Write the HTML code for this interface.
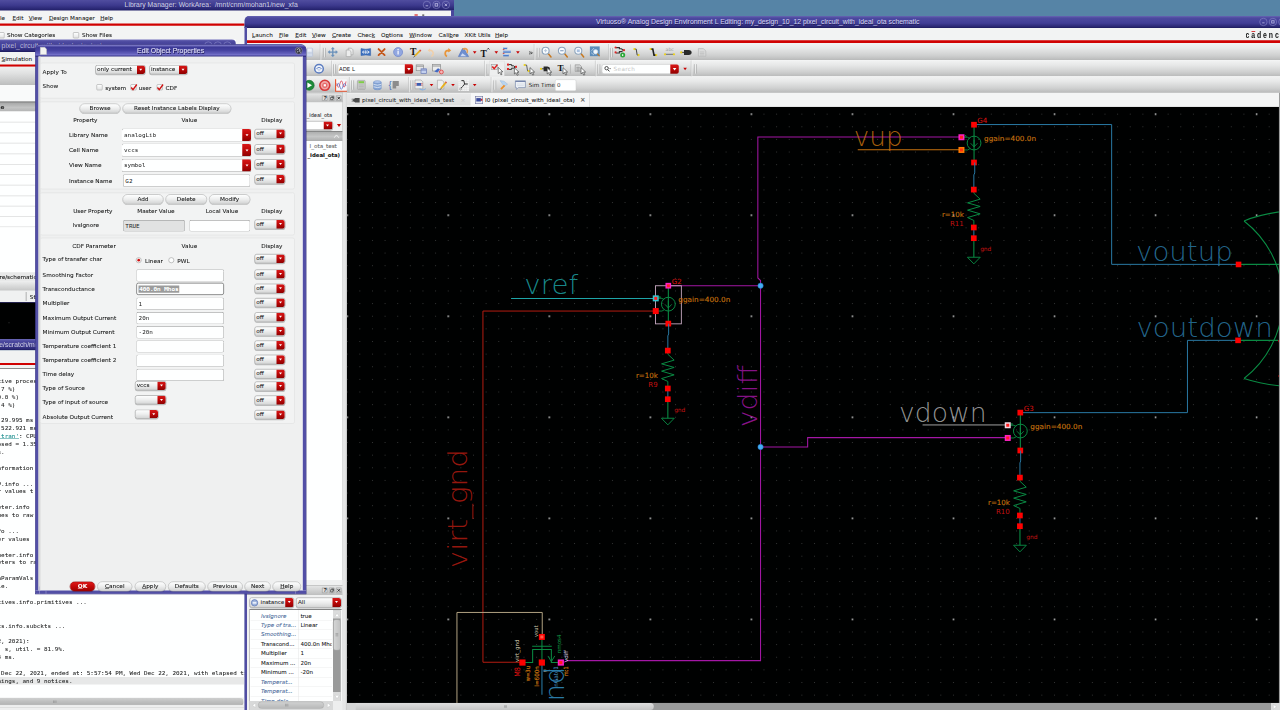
<!DOCTYPE html>
<html lang="en"><head><meta charset="utf-8"><title>Virtuoso Analog Design Environment L Editing</title>
<style>
html,body{margin:0;padding:0}
body{width:1280px;height:710px;overflow:hidden;position:relative;background:#5684a6}
#root{opacity:0.999;position:absolute;left:0;top:0;width:5120px;height:2840px;transform:scale(0.25);transform-origin:0 0;font-family:"DejaVu Sans","Liberation Sans",sans-serif;font-size:23px;color:#1a1a1a;line-height:1;-webkit-text-stroke:0.32px currentColor}
.a{position:absolute;white-space:nowrap}
.t{position:absolute;white-space:nowrap;line-height:32px;height:32px;margin-top:-16px}
.tc{position:absolute;white-space:nowrap;line-height:32px;height:32px;margin-top:-16px;transform:translateX(-50%)}
u{text-decoration-thickness:2.2px;text-underline-offset:1.4px}
.tb{background:linear-gradient(#6c68b6 0%,#4d499f 18%,#423e96 60%,#2c2874 88%,#1e1b5c 100%)}
.ttl{color:#cfcdee;font-family:"Liberation Sans",sans-serif;font-size:27.6px;text-shadow:1.6px 1.6px 0 #1b1850}
.mono{-webkit-text-stroke:0.2px currentColor;font-family:"DejaVu Sans Mono","Liberation Mono",monospace}
.red{background:#d10000}
.tool{background:linear-gradient(#f3f3f3 0%,#e8e8e8 30%,#d0d0d0 72%,#bebebe 94%,#b6b6b6 100%)}
.btn{position:absolute;box-sizing:border-box;border:2.4px solid #a9a9a9;border-radius:20px;background:linear-gradient(#ffffff 0%,#f0f0f0 45%,#d2d2d2 100%);text-align:center;line-height:34.4px;box-shadow:0 2.4px 2.4px rgba(0,0,0,.18)}
.cmb{position:absolute;box-sizing:border-box;border:2.6px solid #8a8a8a;border-radius:8.8px;box-shadow:0 2.8px 2px rgba(0,0,0,.22);background:linear-gradient(#ffffff 0%,#eeeeee 50%,#d4d4d4 100%);overflow:hidden}
.cmb i{position:absolute;right:0;top:0;bottom:0;width:32.8px;background:linear-gradient(#d81818 0%,#c00808 45%,#8e0000 100%);border-radius:0 8px 8px 0}
.cmb i:after{content:"";position:absolute;left:9.6px;top:12.4px;border-left:6.8px solid transparent;border-right:6.8px solid transparent;border-top:8.8px solid #fff}
.cmb span{position:absolute;left:5.2px;top:50%;margin-top:-18px;line-height:32px}
.fld{position:absolute;box-sizing:border-box;border:2.6px solid #a0a0a0;border-top-color:#888;border-radius:8px;background:#fff}
.fld span{position:absolute;left:7.6px;top:50%;margin-top:-16.4px;-webkit-text-stroke:0;line-height:32px;font-family:"DejaVu Sans Mono","Liberation Mono",monospace;font-size:23.8px;color:#222}
.grp{position:absolute;box-sizing:border-box;border:2.4px solid #dcdcdc;border-radius:8px;background:#f3f3f3}
.cb{position:absolute;box-sizing:border-box;width:24px;height:24px;border:2.4px solid #9a9a9a;border-radius:4px;background:linear-gradient(#fff,#e4e4e4)}
</style></head><body><div id="root">
<!-- Library Manager window -->
<div class="a" style="left:0;top:0;width:1815.6px;height:240px;background:#f4f4f4"></div>
<div class="a" style="left:0;top:0;width:1815.6px;height:42.4px;background:linear-gradient(#514d9f 0%,#3e3a8e 50%,#221f68 100%)"></div>
<div class="a" style="left:1804px;top:40px;width:11.6px;height:32px;background:#4a469c"></div>
<div class="t ttl" style="left:498.4px;top:18.8px">Library Manager: WorkArea:&nbsp; /mnt/cnm/mohan1/new_xfa</div>
<svg class="a" style="left:1680px;top:0" width="136" height="44" viewBox="420 0 34 11"><g fill="none" stroke="#8c89c9" stroke-width="0.6"><circle cx="426.9" cy="4.9" r="3.7"/><circle cx="436.4" cy="4.9" r="3.7"/><circle cx="445.9" cy="4.9" r="3.7"/></g><g stroke="#b9b7e2" stroke-width="0.9" fill="none"><path d="M425.6 5.8h2.6"/><rect x="435.1" y="3.7" width="2.6" height="2.4"/><path d="M444.7 3.7l2.4 2.4M447.1 3.7l-2.4 2.4"/></g></svg>
<div class="t" style="left:0;top:72.4px;font-size:22.48px">le</div>
<div class="t" style="left:50px;top:72.4px;font-size:22.48px"><u>E</u>dit</div>
<div class="t" style="left:115.2px;top:72.4px;font-size:22.48px"><u>V</u>iew</div>
<div class="t" style="left:195.6px;top:72.4px;font-size:22.48px"><u>D</u>esign Manager</div>
<div class="t" style="left:400.8px;top:72.4px;font-size:22.48px"><u>H</u>elp</div>
<div class="a red" style="left:0;top:93.6px;width:1804px;height:9.6px"></div>
<div class="cb" style="left:-6px;top:128.8px"></div>
<div class="t" style="left:28px;top:141.2px">Show Categories</div>
<div class="cb" style="left:292px;top:128.8px"></div>
<div class="t" style="left:328px;top:141.2px">Show Files</div>

<!-- ADE window (pixel_circuit...) -->
<div class="a" style="left:0;top:158.4px;width:943.2px;height:1080px;background:#fff"></div>
<div class="a tb" style="left:0;top:158.4px;width:943.2px;height:49.2px;border-radius:0 16px 0 0"></div>
<div class="t ttl" style="left:6.4px;top:182.8px;font-size:28px;color:#b9b6e2">pixel_circuit_with_ideal_ota_test</div>
<svg class="a" style="left:800px;top:158.4px" width="144" height="48" viewBox="200 39.6 36 12"><g fill="none" stroke="#8c89c9" stroke-width="0.6"><circle cx="208.3" cy="45.6" r="3.7"/><circle cx="217.8" cy="45.6" r="3.7"/><circle cx="227.3" cy="45.6" r="3.7"/></g></svg>
<div class="a" style="left:0;top:207.6px;width:943.2px;height:52px;background:#f3f3f3"></div>
<div class="t" style="left:6.4px;top:236.8px"><u>S</u>imulation</div>
<div class="a red" style="left:0;top:258px;width:943.2px;height:8.8px"></div>
<div class="a" style="left:0;top:266px;width:943.2px;height:74.4px;background:linear-gradient(#f0f0f0 0%,#e2e2e2 35%,#c9c9c9 80%,#bdbdbd 100%)"></div>
<div class="a" style="left:0;top:340.4px;width:943.2px;height:66.4px;background:#fafafa"></div>
<div class="a" style="left:0;top:406px;width:943.2px;height:40px;background:linear-gradient(#5c5c5c 0%,#a9a9a9 14%,#c4c4c4 60%,#b3b3b3 100%)"></div>
<div class="t" style="left:2px;top:428px;font-weight:bold;color:#222">e</div>
<div class="a" style="left:0;top:446px;width:943.2px;height:644px;background:#fff"></div>
<div class="a" style="left:0;top:487.2px;width:943.2px;height:3.2px;background:#dcdcdc"></div>
<div class="a" style="left:0;top:529.6px;width:943.2px;height:3.2px;background:#dcdcdc"></div>
<div class="a" style="left:0;top:571.2px;width:943.2px;height:3.2px;background:#dcdcdc"></div>
<div class="a" style="left:0;top:613.6px;width:943.2px;height:3.2px;background:#dcdcdc"></div>
<div class="a" style="left:0;top:656px;width:943.2px;height:3.2px;background:#dcdcdc"></div>
<div class="a" style="left:0;top:696.8px;width:943.2px;height:3.2px;background:#dcdcdc"></div>
<div class="a" style="left:0;top:739.2px;width:943.2px;height:3.2px;background:#dcdcdc"></div>
<div class="a" style="left:0;top:781.6px;width:943.2px;height:3.2px;background:#dcdcdc"></div>
<div class="a" style="left:0;top:822.8px;width:943.2px;height:3.2px;background:#dcdcdc"></div>
<div class="a" style="left:0;top:864.8px;width:943.2px;height:3.2px;background:#dcdcdc"></div>
<div class="a" style="left:0;top:906px;width:943.2px;height:3.2px;background:#dcdcdc"></div>
<div class="a" style="left:0;top:909.6px;width:943.2px;height:180px;background:#fff"></div>
<div class="a" style="left:0;top:1088.8px;width:943.2px;height:38.4px;background:#e9e9e9"></div>
<div class="t" style="left:-2.4px;top:1108.8px">re/schematic</div>
<div class="a" style="left:0;top:1127.2px;width:943.2px;height:36px;background:linear-gradient(#ececec,#c6c6c6)"></div>
<div class="a" style="left:0;top:1163.2px;width:943.2px;height:45.6px;background:#f1f1f1"></div>
<div class="a" style="left:103.2px;top:1168px;width:2.8px;height:36px;background:#9a9a9a"></div>
<div class="t" style="left:119.2px;top:1187.2px">St</div>

<!-- waveform (black) window + CIW -->
<div class="a" style="left:0;top:1207.2px;width:978.4px;height:152px;background:#000;border-top:3.6px solid #4a469c"></div>
<div class="a" style="left:34px;top:1289.2px;width:4px;height:4px;background:#3a3a3a"></div>
<div class="a tb" style="left:0;top:1356px;width:978.4px;height:44.8px"></div>
<div class="t ttl" style="left:-3.2px;top:1378.4px;font-size:27.6px">e/scratch/mohan1/logs/CDS.log</div>
<div class="a" style="left:0;top:1400.8px;width:978.4px;height:80px;background:#f2f2f2"></div>
<div class="a red" style="left:0;top:1452px;width:978.4px;height:8.4px"></div>
<div class="a" style="left:0;top:1472.4px;width:978.4px;height:3.2px;background:#8c8c8c"></div>
<div class="a" style="left:0;top:1475.6px;width:978.4px;height:1364.4px;background:#fff"></div>
<div class="a" style="left:0;top:2708px;width:978.4px;height:30.4px;background:#e8e8e8"></div>
<pre class="a mono" style="white-space:pre;left:-9.88px;top:1508px;margin:0;font-size:23.72px;line-height:31.58px;color:#222">
tive process
.7 %)
0.0 %)
.4 %)

 29.995 ms
 522.921 ms
<span style="color:#168a8a;text-decoration:underline">`tran'</span>: CPU
osed = 1.35
s.

nformation

P.info ...
r values t

eter.info
ues to raw

fo ...
er values

meter.info
eters to ra

nParamVals
le.

tives.info.primitives ...
.

ts.info.subckts ...

2, 2021):
: s, util. = 81.9%.
4 ms.

 Dec 22, 2021, ended at: 5:57:54 PM, Wed Dec 22, 2021, with elapsed ti
nings, and 9 notices.
</pre>
<div class="a" style="left:0;top:2790.4px;width:978.4px;height:49.6px;background:#efefef"></div>
<div class="a" style="left:-24px;top:2792px;width:997.6px;height:29.2px;background:linear-gradient(#cfcfcf,#bdbdbd 60%,#b4b4b4);border-radius:14px;border-bottom:2.4px solid #8e8e8e;box-sizing:border-box"></div>
<div class="a" style="left:213.2px;top:2802px;width:2.4px;height:10.4px;background:#999;box-shadow:4.8px 0 0 #999,9.6px 0 0 #999"></div>
<div class="a" style="left:0;top:2828.8px;width:978.4px;height:2.4px;background:#cfcfcf"></div>
<!-- Virtuoso main window -->
<div class="a" style="left:1658.4px;top:57.2px;width:12.4px;height:5.6px;background:#e04a4a"></div><div class="a" style="left:1688.8px;top:58.4px;width:8px;height:4.8px;background:#444"></div>
<div class="a" style="left:978.4px;top:63.2px;width:4141.6px;height:2776.8px;background:#f3f3f3;border-radius:20px 0 0 0"></div>
<div class="a tb" style="left:978.4px;top:63.2px;width:4141.6px;height:48.4px;border-radius:20px 0 0 0"></div>
<div class="a" style="left:978.4px;top:108px;width:9.6px;height:2732px;background:#514da3"></div>
<div class="t ttl" style="left:2384px;top:87.6px;font-size:27.48px">Virtuoso® Analog Design Environment L Editing: my_design_10_12 pixel_circuit_with_ideal_ota schematic</div>
<svg class="a" style="left:5020px;top:63.2px" width="100" height="48" viewBox="1255 15.8 25 12"><g fill="none" stroke="#8c89c9" stroke-width="0.6"><circle cx="1263.4" cy="22" r="3.7"/><circle cx="1272.9" cy="22" r="3.7"/><circle cx="1282.4" cy="22" r="3.7"/></g><g stroke="#b9b7e2" stroke-width="0.8" fill="none"><path d="M1262.2 22.9h2.4"/><rect x="1271.7" y="20.8" width="2.4" height="2.3"/></g></svg>
<!-- menu -->
<div class="t" style="left:1008px;top:140.8px"><u>L</u>aunch</div>
<div class="t" style="left:1115.6px;top:140.8px"><u>F</u>ile</div>
<div class="t" style="left:1180.8px;top:140.8px"><u>E</u>dit</div>
<div class="t" style="left:1248px;top:140.8px"><u>V</u>iew</div>
<div class="t" style="left:1328px;top:140.8px"><u>C</u>reate</div>
<div class="t" style="left:1429.6px;top:140.8px">Chec<u>k</u></div>
<div class="t" style="left:1523.6px;top:140.8px">O<u>p</u>tions</div>
<div class="t" style="left:1637.2px;top:140.8px"><u>W</u>indow</div>
<div class="t" style="left:1754.4px;top:140.8px">Cali<u>b</u>re</div>
<div class="t" style="left:1858px;top:140.8px">XKit Utils</div>
<div class="t" style="left:1980px;top:140.8px"><u>H</u>elp</div>
<div class="t" style="left:4981.6px;top:140.8px;font-family:'Liberation Sans',sans-serif;font-size:35.2px;letter-spacing:9.8px;color:#111;font-weight:bold;transform:scaleX(.78);transform-origin:0 50%;-webkit-text-stroke:0">cadence</div>
<div class="a" style="left:5006.4px;top:123.6px;width:14.4px;height:3.6px;background:#d10000"></div>
<div class="a red" style="left:988px;top:160.8px;width:4132px;height:10.8px"></div>
<!-- toolbars -->
<div class="a tool" style="left:988px;top:171.6px;width:4132px;height:69.6px"></div>
<div class="a tool" style="left:988px;top:241.2px;width:4132px;height:64.8px"></div>
<div class="a tool" style="left:988px;top:306px;width:4132px;height:64.8px"></div>
<div class="a" style="left:988px;top:240px;width:4132px;height:2.8px;background:#f6f6f6"></div>
<div class="a" style="left:988px;top:304.8px;width:4132px;height:2.8px;background:#f6f6f6"></div>
<!-- tab bar -->
<div class="a" style="left:1386.8px;top:370.4px;width:3733.2px;height:57.2px;background:#f5f5f5;border-top:2.4px solid #b0b0b0;box-sizing:border-box"></div>
<div class="a" style="left:1388px;top:373.6px;width:494.4px;height:48.8px;background:linear-gradient(#e9e9e9,#dedede);border-right:2.4px solid #bdbdbd;box-sizing:border-box"></div>
<div class="a" style="left:1882.4px;top:372.8px;width:475.6px;height:54.4px;background:#f7f7f7;border-right:2.8px solid #c4c4c4;box-sizing:border-box"></div>
<svg class="a" style="left:1404px;top:384px" width="40" height="32" viewBox="0 0 10 8"><path d="M1.4 4.2l2.8-2.2h4.4v4.4H4.2z" fill="#4a4a4a"/><path d="M.6 3.2h2.6M.6 5.2h2.6" stroke="#444" stroke-width=".6"/></svg>
<div class="t" style="left:1447.6px;top:401.2px;color:#333">pixel_circuit_with_ideal_ota_test</div>
<div class="t" style="left:1842.4px;top:400.4px;color:#cfcfcf;font-size:24px">×</div>
<svg class="a" style="left:1898.4px;top:382.4px" width="36" height="36" viewBox="0 0 9 9"><rect x=".8" y=".8" width="7.4" height="7.4" fill="#e8eaf3" stroke="#70749c" stroke-width=".6"/><rect x="1.8" y="2.6" width="4.6" height="3.4" fill="#3a4a9c"/><path d="M6.4 3.3h1.4v2H6.4z" fill="#c22"/></svg>
<div class="t" style="left:1940px;top:401.2px;color:#222">I0 (pixel_circuit_with_ideal_ota)</div>
<div class="t" style="left:2320px;top:400.4px;color:#555;font-size:26.4px">×</div>
<!-- sidebar -->
<div class="a" style="left:988px;top:371.2px;width:398.8px;height:1970px;background:#fff"></div>
<div class="a" style="left:988px;top:371.2px;width:384px;height:39.2px;background:linear-gradient(#e6e6e6,#bfbfbf);border-top:2.4px solid #9e9e9e;box-sizing:border-box"></div>
<div class="a" style="left:988px;top:410.4px;width:384px;height:116px;background:#f4f4f4"></div>
<div class="a" style="left:1370.4px;top:371.2px;width:16.4px;height:2468.8px;background:linear-gradient(90deg,#bdbdbd 0,#e9e9e9 25%,#e2e2e2 80%,#c9c9c9 100%)"></div>
<svg class="a" style="left:1280px;top:376.8px" width="96" height="32" viewBox="320 94.2 24 8"><g fill="#555"><path d="M322.3 95.6h4.8v4.9h-4.8z" fill="#dcdcdc" stroke="#8c8c8c" stroke-width=".5"/><path d="M329.3 95.6h4.8v4.9h-4.8z" fill="#dcdcdc" stroke="#8c8c8c" stroke-width=".5"/><path d="M336.3 95.6h4.8v4.9h-4.8z" fill="#dcdcdc" stroke="#8c8c8c" stroke-width=".5"/></g><text x="323.4" y="100" font-size="5.2" font-weight="bold" font-style="italic" fill="#222" font-family="Liberation Sans,sans-serif">?</text><path d="M330.6 97.4h2.4v2.2h-2.4zM331.4 96.6h2.2v2" fill="none" stroke="#222" stroke-width=".6"/><path d="M337.5 96.8l2.5 2.6M340 96.8l-2.5 2.6" stroke="#111" stroke-width=".8"/></svg>
<div class="t" style="left:1227.2px;top:461.2px;color:#333;font-size:20px">_ideal_ota</div>
<div class="cmb" style="left:988px;top:483.6px;width:343.6px;height:36px;background:#fff"><i style="width:34.8px"></i></div>
<svg class="a" style="left:1346.4px;top:494.4px" width="20" height="16" viewBox="0 0 5 4"><path d="M.4.6h4.2L2.5 3.4z" fill="#c40000"/></svg>
<div class="a" style="left:988px;top:524px;width:382.4px;height:39.6px;background:linear-gradient(#6a6a6a 0,#b0b0b0 12%,#c6c6c6 55%,#adadad 100%)"></div>
<svg class="a" style="left:1334px;top:535.2px" width="24" height="20" viewBox="0 0 6 5"><path d="M.6 4l2.4-2.8L5.4 4" fill="none" stroke="#f2f2f2" stroke-width="1"/></svg>
<div class="t" style="left:1238.4px;top:584px;color:#666;font-size:22.6px">l_ota_test</div>
<div class="t" style="left:1229.6px;top:620.8px;color:#111;font-weight:bold;font-size:21.6px">_ideal_ota)</div>
<div class="a" style="left:988px;top:2320px;width:382.4px;height:21.6px;background:#f1f1f1"></div>
<!-- toolbar icons -->
<svg class="a" style="left:988px;top:172px" width="4132" height="200" viewBox="247 43 1033 50" font-family="'DejaVu Sans','Liberation Sans',sans-serif">
<rect x="306.8" y="48.2" width="5.8" height="8.2" rx=".6" fill="#d4dcea" stroke="#b4c0d8" stroke-width=".6"/><rect x="307.8" y="48.6" width="3.8" height="3" fill="#eef1f8"/><path d="M306.8 53h5.8" stroke="#b4c0d8" stroke-width=".5"/>
<path d="M320.2 44.0V60.0" stroke="#b4b4b4" stroke-width=".6"/><path d="M320.9 44.0V60.0" stroke="#fbfbfb" stroke-width=".6"/>
<path d="M323.4 47.9v9.4M325.4 47.9v9.4" stroke="#a9a9a9" stroke-width=".7"/><path d="M324.4 47.9v9.4" stroke="#fff" stroke-width=".6"/>
<g stroke="#6990ba" stroke-width="1.3" fill="#6990ba" stroke-linejoin="round"><path d="M332.8 48.4v7.4M329.1 52.1h7.4" fill="none"/><path d="M332.8 47.2l1.5 1.9h-3zM332.8 57l1.5-1.9h-3zM327.9 52.1l1.9-1.5v3zM337.7 52.1l-1.9-1.5v3z" stroke-width=".4"/></g>
<g fill="#ededed" stroke="#a8a8a8" stroke-width=".7"><path d="M348.2 48.2h3.2l1.6 1.6v5h-4.8z"/><path d="M346.2 50h3.2l1.6 1.6v5h-4.8z"/></g>
<path d="M361 48.6q4.8 1.3 9.6 0v7q-4.8-1.3-9.6 0z" fill="#3f72c0" stroke="#2f5ca4" stroke-width=".5"/><path d="M362.4 52.1h6.8M364.2 50.6l-1.8 1.5l1.8 1.5M367.4 50.6l1.8 1.5l-1.8 1.5M365.8 50.2v3.8" stroke="#fff" stroke-width=".7" fill="none"/>
<path d="M378.6 49.1l6 6M384.6 49.1l-6 6" stroke="#c4561a" stroke-width="1.9" stroke-linecap="round"/>
<circle cx="398.1" cy="52.1" r="4.5" fill="#93a7e0" stroke="#6c84cc" stroke-width=".7"/><path d="M398.1 50.8v3.8" stroke="#fff" stroke-width="1.2"/><circle cx="398.1" cy="49.5" r=".7" fill="#fff"/>
<text x="409.9" y="55" font-family="'Liberation Serif','DejaVu Serif',serif" font-weight="bold" font-size="9.6" fill="#111">T</text>
<path d="M420.4 50.4l-5.6 5.6" stroke="#e8b01c" stroke-width="1.7"/><path d="M420.8 50l-.9.9" stroke="#d84a4a" stroke-width="1.7"/><path d="M414.8 56l-1.2 1.2" stroke="#444" stroke-width="1"/>
<path d="M429 50.4q4.4-.4 4.2 3.4q-.2 2-1.8 2.6" fill="none" stroke="#f2cfa8" stroke-width="1.5"/><path d="M430 48.4l-2.4 2.2l2.6 1.6z" fill="#f2cfa8"/>
<path d="M449.6 50.6q-4.6-.6-4.4 3.2q.2 2 1.8 2.6" fill="none" stroke="#e8953a" stroke-width="1.8"/><path d="M448.4 48l2.8 2.6l-3 1.9z" fill="#e8953a"/>
<path d="M458.4 56.6l4-8l1.6 0l4.6 8z" fill="#6f8fd0" stroke="#4a6ab8" stroke-width=".5"/><path d="M462.4 53.2l4 3h-6z" fill="#cfdaf2"/><path d="M462.8 49.2q2.4-1.4 4.2.4q1 1.6 0 3.4" fill="none" stroke="#e8a050" stroke-width="1.6"/>
<path d="M472.9 51.3h3.6l-1.8 2.4z" fill="#c80000"/>
<text x="480.5" y="56.8" font-family="'Liberation Serif','DejaVu Serif',serif" font-weight="bold" font-size="9.4" fill="#111">T</text><path d="M487.2 49.6l1.1-1.4l1.1 1.4" fill="none" stroke="#111" stroke-width=".7"/>
<path d="M494.5 51.3h3.6l-1.8 2.4z" fill="#c80000"/>
<g fill="#4f7fcc"><rect x="503.2" y="47.2" width="4" height="2" /><rect x="503.2" y="50.6" width="7.6" height="2.2"/><rect x="503.2" y="54.2" width="5.6" height="2.2"/></g><g fill="#dbe6f8"><rect x="503.2" y="47.2" width="4" height=".7"/><rect x="503.2" y="50.6" width="7.6" height=".7"/><rect x="503.2" y="54.2" width="5.6" height=".7"/></g><path d="M502.8 49.6h1.6M502.8 53.4h1.6" stroke="#d02020" stroke-width=".8"/>
<path d="M516.1 51.3h3.6l-1.8 2.4z" fill="#c80000"/>
<path d="M529.2 51.6l1.3 1.3l-1.3 1.3M531 51.6l1.3 1.3l-1.3 1.3" fill="none" stroke="#111" stroke-width=".8"/>
<path d="M534.2 44.0V60.0" stroke="#b4b4b4" stroke-width=".6"/><path d="M534.9 44.0V60.0" stroke="#fbfbfb" stroke-width=".6"/>
<path d="M537.2 47.9v9.4M539.2 47.9v9.4" stroke="#a9a9a9" stroke-width=".7"/><path d="M538.2 47.9v9.4" stroke="#fff" stroke-width=".6"/>
<path d="M548.0 53.3l3 3.6" stroke="#c8781e" stroke-width="1.5" stroke-linecap="round"/>
<circle cx="545.6" cy="50.7" r="3.5" fill="#fbfdff" stroke="#8ea4bc" stroke-width="1.1"/>
<path d="M544.0 50.7h3.2M545.6 49.1v3.2" stroke="#b8c8dc" stroke-width="1"/>
<path d="M564.3 53.3l3 3.6" stroke="#c8781e" stroke-width="1.5" stroke-linecap="round"/>
<circle cx="561.9" cy="50.7" r="3.5" fill="#fbfdff" stroke="#8ea4bc" stroke-width="1.1"/>
<path d="M560.2 50.7h3.4" stroke="#8ea4c4" stroke-width="1.2"/>
<path d="M580.7 53.3l3 3.6" stroke="#c8781e" stroke-width="1.5" stroke-linecap="round"/>
<circle cx="578.3" cy="50.7" r="3.5" fill="#fbfdff" stroke="#8ea4bc" stroke-width="1.1"/>
<rect x="576.6" y="49.1" width="3.4" height="3.2" fill="#a9c0e0" stroke="#fff" stroke-width=".4"/>
<rect x="589.9" y="46.4" width="9.8" height="9.8" fill="#5d8cba"/><path d="M591 51.4l3-3.4M594 55l-3-2.4" stroke="#dfe9f4" stroke-width=".6"/><circle cx="595.6" cy="51.8" r="2.2" fill="#f4f8fc" stroke="#c9d8ea" stroke-width=".6"/><path d="M597.2 53.6l2.4 2.6" stroke="#c8781e" stroke-width="1.1"/>
<path d="M608.6 44.0V60.0" stroke="#b4b4b4" stroke-width=".6"/><path d="M609.3 44.0V60.0" stroke="#fbfbfb" stroke-width=".6"/>
<path d="M610.4 47.9v9.4M612.4 47.9v9.4" stroke="#a9a9a9" stroke-width=".7"/><path d="M611.4 47.9v9.4" stroke="#fff" stroke-width=".6"/>
<path d="M616 47.6h3.4v1.2h2l2 1.4l-2 1.4h-2v1.4H616" fill="none" stroke="#333" stroke-width="1.1"/><g fill="#e02828"><circle cx="615.6" cy="47.5" r="1.1"/><circle cx="615.6" cy="52.4" r="1.1"/><circle cx="624" cy="50.2" r="1.1"/></g><circle cx="622.7" cy="55.1" r="2.5" fill="#2ca838"/><path d="M622 53.9l1.8 1.2l-1.8 1.2z" fill="#fff"/>
<path d="M634.4 49.1h1.8l1 6h1.4" fill="none" stroke="#333" stroke-width=".9"/><circle cx="634.4" cy="49.1" r="1.1" fill="#f0d41c"/><circle cx="638.6" cy="55.1" r="1.1" fill="#f0d41c"/>
<path d="M650.6 49.1h2.2l1.2 6h2" fill="none" stroke="#222" stroke-width="1.6"/><circle cx="650.6" cy="49.1" r="1.1" fill="#f0d41c"/><circle cx="656.2" cy="55.1" r="1.1" fill="#f0d41c"/>
<text x="665.6" y="51.4" font-size="4.6" fill="#9a9a9a">abc</text><path d="M665 54.3h9" stroke="#555" stroke-width=".8"/><circle cx="665" cy="54.3" r="1.1" fill="#f0d41c"/><circle cx="674" cy="54.3" r="1.1" fill="#f0d41c"/>
<path d="M681.2 52.4h3" stroke="#333" stroke-width=".9"/><path d="M684 49.9h4.6q3 .4 3 2.5q0 2.1-3 2.5H684z" fill="#2a2a2a"/><circle cx="681.2" cy="52.4" r="1.1" fill="#f0d41c"/>
<path d="M698.4 48.6h5l2.4 2.4v5.2h-7.4z" fill="#dcdcdc" stroke="#b0b0b0" stroke-width=".6"/><path d="M699.8 52h4.6M699.8 53.6h4.6M699.8 55h4.6" stroke="#b4b4b4" stroke-width=".6"/>
<circle cx="319" cy="68.7" r="4.3" fill="#f2f5fb" stroke="#5c7cc0" stroke-width="1.5"/><path d="M316.4 68.6q2.6-2.6 5.2 0" fill="none" stroke="#5c7cc0" stroke-width=".9"/><path d="M317.6 69.4h2.8l-1.4 1.9z" fill="#fff" stroke="#8ea4d4" stroke-width=".4"/>
<path d="M331.6 60.6V76.4" stroke="#b4b4b4" stroke-width=".6"/><path d="M332.3 60.6V76.4" stroke="#fbfbfb" stroke-width=".6"/>
<path d="M333.6 64.2v9.4M335.6 64.2v9.4" stroke="#a9a9a9" stroke-width=".7"/><path d="M334.6 64.2v9.4" stroke="#fff" stroke-width=".6"/>
<rect x="338" y="64.3" width="75" height="9.4" rx="1.6" fill="#fff" stroke="#bdbdbd" stroke-width=".5"/><path d="M404.8 64.3h6.6q1.6 0 1.6 1.6v6.2q0 1.6-1.6 1.6h-6.6z" fill="url(#rg)"/><path d="M407.1 68.1h3.6l-1.8 2.4z" fill="#fff"/>
<text x="339" y="71" font-size="5.4" fill="#222">ADE L</text>
<rect x="416.2" y="64.9" width="7.4" height="5.8" fill="#e6e6e6" stroke="#8e8e8e" stroke-width=".7"/><path d="M416.2 66.2h7.4" stroke="#8e8e8e" stroke-width=".9"/><rect x="421" y="68.8" width="5.4" height="4.6" fill="#c4d0ee" stroke="#6c7cb8" stroke-width=".7"/><path d="M421 70h5.4" stroke="#6c7cb8" stroke-width=".9"/>
<rect x="432.6" y="64.6" width="8" height="6.4" fill="#ececec" stroke="#8e8e8e" stroke-width=".7"/><path d="M432.6 66h8" stroke="#8e8e8e" stroke-width=".9"/><path d="M434.4 71.6l3.6-3.4l2 1l-2.6 3.4z" fill="#4468c4"/><circle cx="441.4" cy="72" r="1.9" fill="#f4b8b8" stroke="#e03c3c" stroke-width=".8"/>
<path d="M484.6 60.6V76.4" stroke="#b4b4b4" stroke-width=".6"/><path d="M485.3 60.6V76.4" stroke="#fbfbfb" stroke-width=".6"/>
<path d="M487.0 64.2v9.4M489.0 64.2v9.4" stroke="#a9a9a9" stroke-width=".7"/><path d="M488.0 64.2v9.4" stroke="#fff" stroke-width=".6"/>
<rect x="489.6" y="61" width="14.6" height="15" fill="#efefef" stroke="#dadada" stroke-width=".4"/>
<rect x="491.2" y="64.4" width="6" height="5" fill="#e4e4e4" stroke="#9a9a9a" stroke-width=".6"/><path d="M492.2 66.4l2 2.2l3.2-4" fill="none" stroke="#e02020" stroke-width="1.5"/>
<path d="M498.2 67.4l0 6.2l1.5 -1.3l1.2 2.6l1.1 -0.5l-1.2 -2.6l2.0 0.0z" fill="#fff" stroke="#333" stroke-width=".6"/>
<path d="M508.4 64.6h3.2v1.2h2l1.6 1.2l-1.6 1.2h-2v1.2h-3.2" fill="none" stroke="#333" stroke-width="1"/><g fill="#e02828"><rect x="507" y="63.6" width="2" height="2"/><rect x="507" y="68" width="2" height="2"/><rect x="515" y="65.8" width="2" height="2"/></g>
<path d="M514.4 67.8l0 6.2l1.5 -1.3l1.2 2.6l1.1 -0.5l-1.2 -2.6l2.0 0.0z" fill="#fff" stroke="#333" stroke-width=".6"/>
<path d="M524.6 65h2l1 6h1.6" fill="none" stroke="#444" stroke-width=".8"/><circle cx="524.6" cy="65" r="1.1" fill="#f0d41c"/><circle cx="528.6" cy="71" r="1" fill="#f0d41c"/>
<path d="M530.0 67.6l0 6.2l1.5 -1.3l1.2 2.6l1.1 -0.5l-1.2 -2.6l2.0 0.0z" fill="#fff" stroke="#333" stroke-width=".6"/>
<path d="M541 68.8h3" stroke="#333" stroke-width=".9"/><path d="M543.6 66.4h3.8q2.6.4 2.6 2.4q0 2-2.6 2.4h-3.8z" fill="#2a2a2a"/><circle cx="541" cy="68.8" r="1.1" fill="#f0d41c"/>
<path d="M547.2 67.8l0 6.2l1.5 -1.3l1.2 2.6l1.1 -0.5l-1.2 -2.6l2.0 0.0z" fill="#fff" stroke="#333" stroke-width=".6"/>
<text x="557.4" y="71.2" font-family="'Liberation Serif','DejaVu Serif',serif" font-weight="bold" font-size="9" fill="#111">T</text>
<path d="M563.0 67.6l0 6.2l1.5 -1.3l1.2 2.6l1.1 -0.5l-1.2 -2.6l2.0 0.0z" fill="#fff" stroke="#333" stroke-width=".6"/>
<path d="M570.5 64.4v9.2" stroke="#a8a8a8" stroke-width=".6"/>
<path d="M575.2 64.8h4.6l1.6 1.6v5H575.2z" fill="#d4d4d4" stroke="#8e8e8e" stroke-width=".6"/><path d="M576.2 67.6h4M576.2 69h4M576.2 70.4h4M578 66.6v5" stroke="#8a8a8a" stroke-width=".5"/>
<path d="M581.0 67.6l0 6.2l1.5 -1.3l1.2 2.6l1.1 -0.5l-1.2 -2.6l2.0 0.0z" fill="#fff" stroke="#333" stroke-width=".6"/>
<path d="M595.4 60.6V76.4" stroke="#b4b4b4" stroke-width=".6"/><path d="M596.1 60.6V76.4" stroke="#fbfbfb" stroke-width=".6"/>
<path d="M597.8 64.2v9.4M599.8 64.2v9.4" stroke="#a9a9a9" stroke-width=".7"/><path d="M598.8 64.2v9.4" stroke="#fff" stroke-width=".6"/>
<rect x="602" y="64.4" width="76.8" height="9.3" rx="2" fill="#fff" stroke="#c4c4c4" stroke-width=".5"/><path d="M670.3 64.4h6.5q2 0 2 2v5.3q0 2-2 2h-6.5z" fill="url(#rg)"/><path d="M672.8 68.1h3.6l-1.8 2.4z" fill="#fff"/>
<circle cx="606.6" cy="68.2" r="1.7" fill="none" stroke="#3a3a3a" stroke-width=".9"/><path d="M607.8 69.6l1.6 1.8" stroke="#3a3a3a" stroke-width="1"/><path d="M609.2 68.2h1.8l-.9 1.1z" fill="#3a3a3a"/>
<text x="613.6" y="71" font-size="5.7" fill="#c6c6c6" letter-spacing=".35">Search</text>
<path d="M683.3 67.8h3.6l-1.8 2.4z" fill="#c80000"/>
<path d="M691.2 60.6V76.4" stroke="#b4b4b4" stroke-width=".6"/><path d="M691.9 60.6V76.4" stroke="#fbfbfb" stroke-width=".6"/>
<path d="M694.4 64.2v9.4M696.4 64.2v9.4" stroke="#a9a9a9" stroke-width=".7"/><path d="M695.4 64.2v9.4" stroke="#fff" stroke-width=".6"/>
<circle cx="309.2" cy="85.3" r="5" fill="#1f8a3a" stroke="#14682a" stroke-width=".6"/><path d="M307.4 82.6l4.6 2.7l-4.6 2.7z" fill="#fff"/>
<circle cx="324.8" cy="85.3" r="5" fill="#f2a8a8" stroke="#d83a3a" stroke-width="1.6"/><circle cx="324.8" cy="85.3" r="2.6" fill="#e86a6a"/><rect x="323.7" y="84.2" width="2.2" height="2.2" fill="#fff"/>
<rect x="335.6" y="79.4" width="11.2" height="11.6" fill="#f8f8fb"/><path d="M335.6 79.2v12h11.4" fill="none" stroke="#e8522c" stroke-width="1.1"/><path d="M336.8 83.4q1.6 8 3.2 0q1.6-6 3.2 2q1.2 5 2.8-4" fill="none" stroke="#d84a5a" stroke-width=".8"/><path d="M336.8 86q1.6-6 3.2 1q1.4 5 3-1q1.4-5 3 0" fill="none" stroke="#4a6ac8" stroke-width=".7"/>
<path d="M349.4 77.0V92.4" stroke="#b4b4b4" stroke-width=".6"/><path d="M350.1 77.0V92.4" stroke="#fbfbfb" stroke-width=".6"/>
<path d="M351.6 80.3v9.4M353.6 80.3v9.4" stroke="#a9a9a9" stroke-width=".7"/><path d="M352.6 80.3v9.4" stroke="#fff" stroke-width=".6"/>
<rect x="357.4" y="80.4" width="7.8" height="9" rx=".8" fill="#c9c9c9" stroke="#9c9c9c" stroke-width=".6"/><rect x="358.6" y="81.2" width="5.4" height="2" fill="#80cc48"/><path d="M358.8 85h5M358.8 86.6h5M358.8 88.2h5" stroke="#b0b0b0" stroke-width=".7"/>
<path d="M373.6 82v6.4q0 1.4 3.8 1.4t3.8-1.4V82" fill="#86a4d4" stroke="#6486c0" stroke-width=".5"/><ellipse cx="377.4" cy="82" rx="3.8" ry="1.3" fill="#b4c8ec" stroke="#6486c0" stroke-width=".5"/><path d="M373.6 84.4q3.8 1.6 7.6 0M373.6 86.8q3.8 1.6 7.6 0" fill="none" stroke="#e4ecf8" stroke-width=".8"/>
<text x="388.4" y="88.2" font-size="9.6" fill="#4a6cb8" font-family="'Liberation Sans',sans-serif">{</text><path d="M392.6 81h6.2v5h-2.6v2.6h-3.6z" fill="#8c8c8c"/>
<path d="M408.6 77.0V92.4" stroke="#b4b4b4" stroke-width=".6"/><path d="M409.3 77.0V92.4" stroke="#fbfbfb" stroke-width=".6"/>
<path d="M410.8 80.3v9.4M412.8 80.3v9.4" stroke="#a9a9a9" stroke-width=".7"/><path d="M411.8 80.3v9.4" stroke="#fff" stroke-width=".6"/>
<path d="M415 80h6l1.8 1.8v7H415z" fill="#ececec" stroke="#9c9c9c" stroke-width=".6"/><rect x="416.6" y="83" width="4.6" height="2.8" fill="#3c5cb0"/><path d="M415.4 83.6h1.2M415.4 85.2h1.2M421.2 83.6h1.4M421.2 85.2h1.4" stroke="#e03030" stroke-width=".6"/><path d="M419.6 88.6q2.6 2.6 6.2 0" fill="none" stroke="#8ab0e0" stroke-width="1.1"/>
<path d="M429.7 83.9h3.6l-1.8 2.4z" fill="#c80000"/>
<path d="M437.4 80.2h4.6l1.8 1.8v7h-6.4z" fill="#efefef" stroke="#9c9c9c" stroke-width=".6"/><path d="M446 82.4l-5 6" stroke="#e8b01c" stroke-width="1.7"/><path d="M446.4 81.9l-.7.8" stroke="#d84a4a" stroke-width="1.7"/><path d="M441 88.4l-.8 1.2" stroke="#444" stroke-width=".9"/>
<path d="M451.2 83.9h3.6l-1.8 2.4z" fill="#c80000"/>
<rect x="458.4" y="79.6" width="10.6" height="11.4" fill="#f4f4f4"/><path d="M460.4 79.6v11.4M462.4 79.6v11.4M464.4 79.6v11.4M466.4 79.6v11.4M458.4 81.6h10.6M458.4 83.6h10.6M458.4 85.6h10.6M458.4 87.6h10.6M458.4 89.6h10.6" stroke="#dcdcdc" stroke-width=".4"/><path d="M461.4 80.6h2.4l.8 3.4l-2 2.6l-2.6 2.4M464.4 84h3.4" fill="none" stroke="#333" stroke-width="1"/><circle cx="460.6" cy="89" r="1" fill="#eee" stroke="#555" stroke-width=".4"/>
<path d="M472.9 83.9h3.6l-1.8 2.4z" fill="#c80000"/>
<path d="M491.2 77.0V92.4" stroke="#b4b4b4" stroke-width=".6"/><path d="M491.9 77.0V92.4" stroke="#fbfbfb" stroke-width=".6"/>
<path d="M493.8 80.3v9.4M495.8 80.3v9.4" stroke="#a9a9a9" stroke-width=".7"/><path d="M494.8 80.3v9.4" stroke="#fff" stroke-width=".6"/>
<path d="M500 80.6l4 .6l3.6 3l-3.4 2.2z" fill="#b8d4f0" stroke="#9ab8dc" stroke-width=".5"/><path d="M504.6 85.4l-3.6 3.8" stroke="#f09028" stroke-width="1.8"/>
<path d="M515.4 80.8h10v6.8h-7l-2 1.8v-1.8h-1z" fill="#eef1f6" stroke="#8896b4" stroke-width=".8"/><path d="M515.4 81.4h10" stroke="#6c7ca4" stroke-width="1"/><path d="M517 84h6.8M517 85.6h6.8" stroke="#c9d0de" stroke-width=".5"/>
<text x="528.7" y="87.4" font-size="5.65" fill="#222">Sim Time</text>
<rect x="555.2" y="79.6" width="20.8" height="11.2" rx="1.4" fill="#fff" stroke="#c9c9c9" stroke-width=".5"/><text x="557" y="87.4" font-size="5.5" fill="#333">0</text>
<defs><linearGradient id="rg" x1="0" y1="0" x2="0" y2="1"><stop offset="0" stop-color="#da1a1a"/><stop offset=".45" stop-color="#c20a0a"/><stop offset="1" stop-color="#8e0000"/></linearGradient></defs>
</svg>
<!-- property panel -->
<div class="a" style="left:988px;top:2341.2px;width:382.4px;height:498.8px;background:#f1f1f1"></div>
<div class="a" style="left:988px;top:2341.2px;width:382.4px;height:38.4px;background:linear-gradient(#e6e6e6,#bfbfbf);border-top:2.4px solid #9e9e9e;box-sizing:border-box"></div>
<svg class="a" style="left:1280px;top:2345.6px" width="96" height="32" viewBox="320 94.2 24 8"><g><path d="M322.3 95.6h4.8v4.9h-4.8z" fill="#dcdcdc" stroke="#8c8c8c" stroke-width=".5"/><path d="M329.3 95.6h4.8v4.9h-4.8z" fill="#dcdcdc" stroke="#8c8c8c" stroke-width=".5"/><path d="M336.3 95.6h4.8v4.9h-4.8z" fill="#dcdcdc" stroke="#8c8c8c" stroke-width=".5"/></g><text x="323.4" y="100" font-size="5.2" font-weight="bold" font-style="italic" fill="#222" font-family="Liberation Sans,sans-serif">?</text><path d="M330.6 97.4h2.4v2.2h-2.4zM331.4 96.6h2.2v2" fill="none" stroke="#222" stroke-width=".6"/><path d="M337.5 96.8l2.5 2.6M340 96.8l-2.5 2.6" stroke="#111" stroke-width=".8"/></svg>
<div class="cmb" style="left:998px;top:2389.6px;width:178.4px;height:41.6px"><span style="left:42.4px;font-size:22.4px">instance</span><i style="width:33.2px"></i></div>
<svg class="a" style="left:1003.2px;top:2395.6px" width="32" height="32" viewBox="0 0 8 8"><circle cx="3.8" cy="3.8" r="3.2" fill="#9fb4dc" stroke="#5c74b4" stroke-width=".7"/><rect x="2" y="2.9" width="3.6" height="1.8" fill="#e9eefa"/></svg>
<div class="cmb" style="left:1183.6px;top:2389.6px;width:182px;height:41.6px"><span style="left:6.4px;font-size:22.4px">All</span><i style="width:33.2px"></i></div>
<div class="a" style="left:998px;top:2436px;width:368px;height:404px;background:#fff;border-top:3.2px solid #5a5a5a;border-left:2.4px solid #8c8c8c;box-sizing:border-box"></div>
<div class="t" style="left:1044px;top:2461.6px;font-size:22.2px;font-style:italic;color:#4d6d9c">lvsIgnore</div>
<div class="t" style="left:1201.6px;top:2461.6px;font-size:22.2px;color:#1a1a1a;width:124px;overflow:hidden">true</div>
<div class="a" style="left:1002px;top:2480.4px;width:326px;height:2px;background:#ececec"></div>
<div class="t" style="left:1044px;top:2499.6px;font-size:22.2px;font-style:italic;color:#4d6d9c">Type of tra...</div>
<div class="t" style="left:1201.6px;top:2499.6px;font-size:22.2px;color:#1a1a1a;width:124px;overflow:hidden">Linear</div>
<div class="a" style="left:1002px;top:2518.4px;width:326px;height:2px;background:#ececec"></div>
<div class="t" style="left:1044px;top:2537.2px;font-size:22.2px;font-style:italic;color:#4d6d9c">Smoothing...</div>
<div class="a" style="left:1002px;top:2556.4px;width:326px;height:2px;background:#ececec"></div>
<div class="t" style="left:1044px;top:2575.2px;font-size:22.2px;color:#1a1a1a">Transcond...</div>
<div class="t" style="left:1201.6px;top:2575.2px;font-size:22.2px;color:#1a1a1a;width:124px;overflow:hidden">400.0n Mho</div>
<div class="a" style="left:1002px;top:2594px;width:326px;height:2px;background:#ececec"></div>
<div class="t" style="left:1044px;top:2613.2px;font-size:22.2px;color:#1a1a1a">Multiplier</div>
<div class="t" style="left:1201.6px;top:2613.2px;font-size:22.2px;color:#1a1a1a;width:124px;overflow:hidden">1</div>
<div class="a" style="left:1002px;top:2632px;width:326px;height:2px;background:#ececec"></div>
<div class="t" style="left:1044px;top:2651.2px;font-size:22.2px;color:#1a1a1a">Maximum ...</div>
<div class="t" style="left:1201.6px;top:2651.2px;font-size:22.2px;color:#1a1a1a;width:124px;overflow:hidden">20n</div>
<div class="a" style="left:1002px;top:2670px;width:326px;height:2px;background:#ececec"></div>
<div class="t" style="left:1044px;top:2688.8px;font-size:22.2px;color:#1a1a1a">Minimum ...</div>
<div class="t" style="left:1201.6px;top:2688.8px;font-size:22.2px;color:#1a1a1a;width:124px;overflow:hidden">-20n</div>
<div class="a" style="left:1002px;top:2708px;width:326px;height:2px;background:#ececec"></div>
<div class="t" style="left:1044px;top:2726.8px;font-size:22.2px;font-style:italic;color:#4d6d9c">Temperat...</div>
<div class="a" style="left:1002px;top:2745.6px;width:326px;height:2px;background:#ececec"></div>
<div class="t" style="left:1044px;top:2764.8px;font-size:22.2px;font-style:italic;color:#4d6d9c">Temperat...</div>
<div class="a" style="left:1002px;top:2783.6px;width:326px;height:2px;background:#ececec"></div>
<div class="t" style="left:1044px;top:2802.4px;font-size:22.2px;font-style:italic;color:#4d6d9c">Time dela...</div>
<div class="a" style="left:1002px;top:2821.6px;width:326px;height:2px;background:#ececec"></div>
<div class="a" style="left:1192.8px;top:2440px;width:2px;height:364px;background:#e4e4e4"></div>
<div class="a" style="left:1332px;top:2442.4px;width:31.2px;height:364px;background:#9a9a9a"></div>
<div class="a" style="left:1332px;top:2442.4px;width:31.2px;height:32px;background:#dcdcdc"></div>
<svg class="a" style="left:1336.8px;top:2449.6px" width="24" height="20" viewBox="0 0 6 5"><path d="M.4 4.2L2.8.8l2.4 3.4z" fill="#fff" stroke="#c4c4c4" stroke-width=".5"/></svg>
<div class="a" style="left:1332px;top:2476.8px;width:31.2px;height:125.6px;background:linear-gradient(90deg,#d6d6d6,#c2c2c2);border-radius:12px;border:2px solid #a8a8a8;box-sizing:border-box"></div>
<div class="a" style="left:1342.4px;top:2533.6px;width:10.4px;height:2px;background:#8a8a8a;box-shadow:0 4.4px 0 #8a8a8a,0 8.8px 0 #8a8a8a"></div>
<div class="a" style="left:1332px;top:2768px;width:31.2px;height:36px;background:#dcdcdc"></div>
<svg class="a" style="left:1336.8px;top:2777.6px" width="24" height="20" viewBox="0 0 6 5"><path d="M.4.8h4.8L2.8 4.2z" fill="#fff" stroke="#c4c4c4" stroke-width=".5"/></svg>
<div class="a" style="left:998px;top:2804px;width:368px;height:36px;background:#d9d9d9"></div>
<div class="a" style="left:1032px;top:2805.6px;width:264px;height:29.6px;background:linear-gradient(#d2d2d2,#b9b9b9);border-radius:14px;border:2px solid #a2a2a2;box-sizing:border-box"></div>
<div class="a" style="left:1141.6px;top:2815.2px;width:2px;height:10.4px;background:#8a8a8a;box-shadow:4.4px 0 0 #8a8a8a,8.8px 0 0 #8a8a8a"></div>
<svg class="a" style="left:1005.6px;top:2810.4px" width="20" height="24" viewBox="0 0 5 6"><path d="M4.2.4L.8 2.8l3.4 2.4z" fill="#fff" stroke="#c4c4c4" stroke-width=".5"/></svg>
<svg class="a" style="left:1306.4px;top:2810.4px" width="20" height="24" viewBox="0 0 5 6"><path d="M.8.4l3.4 2.4L.8 5.2z" fill="#fff" stroke="#c4c4c4" stroke-width=".5"/></svg>
<div class="a" style="left:1332px;top:2804px;width:38.4px;height:36px;background:#eee"></div>
<!-- schematic canvas -->
<svg class="a" style="left:1386.8px;top:427.2px" width="3728.8" height="2384.8" viewBox="346.7 106.8 932.2 596.2" font-family="'DejaVu Sans','Liberation Sans',sans-serif">
<defs>
<pattern id="gm" patternUnits="userSpaceOnUse" x="5.630" y="0.030" width="12.630" height="12.630"><rect x="0" y="0" width="1" height="1" fill="#353535"/></pattern>
<pattern id="gM" patternUnits="userSpaceOnUse" x="43.270" y="12.410" width="101.040" height="101.040"><rect x="0" y="0" width="1.5" height="1.5" fill="#cfcfcf"/></pattern>
</defs>
<rect x="346.7" y="106.8" width="932.2" height="596.2" fill="#000"/>
<rect x="346.7" y="106.8" width="932.2" height="596.2" fill="url(#gm)"/>
<rect x="346.7" y="106.8" width="932.2" height="596.2" fill="url(#gM)"/>
<path d="M960.5 137.1H757.8V278L760.5 280.6V660.7H567" fill="none" stroke="#a517a5" stroke-width="1.05" />
<path d="M668.2 285.8H760.5" fill="none" stroke="#a517a5" stroke-width="1.05" />
<path d="M760.5 447H807.6V437.7H1007.6" fill="none" stroke="#a517a5" stroke-width="1.05" />
<path d="M974 124.6H1111.6V264.4H1238.3" fill="none" stroke="#2b7aa6" stroke-width="1.00" />
<path d="M1020.3 412.7H1187.4V340.4H1238" fill="none" stroke="#2b7aa6" stroke-width="1.00" />
<path d="M511 298.5H655.5" fill="none" stroke="#1fa5a8" stroke-width="1.05" />
<path d="M655.5 311.1H482.9V662.3H522.5" fill="none" stroke="#b81d12" stroke-width="1.00" />
<path d="M857.7 149.9H960.5" fill="none" stroke="#c8720f" stroke-width="1.05" />
<path d="M922.5 425H1007.6" fill="none" stroke="#a2a2a2" stroke-width="1.00" />
<circle cx="760.5" cy="285.8" r="2.7" fill="#46aef2" stroke="#1c6fc0" stroke-width=".5"/>
<circle cx="760.5" cy="447.0" r="2.7" fill="#46aef2" stroke="#1c6fc0" stroke-width=".5"/>
<text x="853.8" y="145.8" font-size="26.6" fill="#c8720f" fill-opacity=".84" font-weight="200" font-family="'DejaVu Sans Light','DejaVu Sans',sans-serif" textLength="48.8" lengthAdjust="spacingAndGlyphs" >vup</text>
<text x="1136.0" y="261.3" font-size="27.0" fill="#2b7aa6" fill-opacity=".84" font-weight="200" font-family="'DejaVu Sans Light','DejaVu Sans',sans-serif" textLength="96.8" lengthAdjust="spacingAndGlyphs" >voutup</text>
<text x="1136.4" y="336.8" font-size="27.0" fill="#2b7aa6" fill-opacity=".84" font-weight="200" font-family="'DejaVu Sans Light','DejaVu Sans',sans-serif" textLength="136.5" lengthAdjust="spacingAndGlyphs" >voutdown</text>
<text x="524.2" y="293.6" font-size="26.2" fill="#1fa5a8" fill-opacity=".84" font-weight="200" font-family="'DejaVu Sans Light','DejaVu Sans',sans-serif" textLength="54.0" lengthAdjust="spacingAndGlyphs" >vref</text>
<text x="899.0" y="421.8" font-size="27.0" fill="#b0b0b0" fill-opacity=".84" font-weight="200" font-family="'DejaVu Sans Light','DejaVu Sans',sans-serif" textLength="87.5" lengthAdjust="spacingAndGlyphs" >vdown</text>
<text x="756.6" y="427.3" font-size="27.0" fill="#a517a5" fill-opacity=".84" font-weight="200" font-family="'DejaVu Sans Light','DejaVu Sans',sans-serif" textLength="62.3" lengthAdjust="spacingAndGlyphs" transform="rotate(-90 756.6 427.3)">vdiff</text>
<text x="467.4" y="568.2" font-size="27.0" fill="#b81d12" fill-opacity=".84" font-weight="200" font-family="'DejaVu Sans Light','DejaVu Sans',sans-serif" textLength="119.2" lengthAdjust="spacingAndGlyphs" transform="rotate(-90 467.4 568.2)">virt_gnd</text>
<path d="M974.0 124.7V162.6" fill="none" stroke="#0b8a43" stroke-width="1.10" />
<circle cx="974.0" cy="143.1" r="6.9" fill="none" stroke="#0b8a43" stroke-width="1.0"/>
<path d="M974.0 139.7V146.9M970.6 143.3l3.4 3.6l3.4 -3.6" fill="none" stroke="#0b8a43" stroke-width="0.90" />
<path d="M961.4 137.3H967.6l2.2 1.2M961.4 150.0H967.6l2.2 -1.2M964.8 136.9l.7 -1.6l.9 1.4" fill="none" stroke="#0b8a43" stroke-width="0.90" />
<rect x="971.1" y="121.9" width="5.7" height="5.7" fill="#ff0000"/>
<rect x="971.1" y="159.7" width="5.7" height="5.7" fill="#ff0000"/>
<rect x="958.4" y="134.3" width="6.0" height="6.0" fill="#ff22c4"/>
<rect x="959.9" y="135.8" width="3.0" height="3.0" fill="#ff2020"/>
<rect x="958.4" y="147.0" width="6.0" height="6.0" fill="#ff7a00"/>
<rect x="959.9" y="148.5" width="3.0" height="3.0" fill="#ff3010"/>
<text x="977.3" y="122.6" font-size="7.10" fill="#e01212" text-anchor="start" >G4</text>
<text x="984.0" y="140.6" font-size="7.10" fill="#c8720f" text-anchor="start" textLength="52" lengthAdjust="spacingAndGlyphs" stroke="#c8720f" stroke-width=".12">ggain=400.0n</text>
<path d="M974.7 162.6V173L973.8 175V189.7" fill="none" stroke="#2b7aa6" stroke-width="1.00" />
<path d="M973.8 189.7V193.3L980.1 199.2L967.5 202.9L980.1 206.5L967.5 210.2L980.1 213.9L967.5 217.6L973.8 220.5V227.6" fill="none" stroke="#0b8a43" stroke-width="1.00" />
<path d="M973.8 227.6V238.3" fill="none" stroke="#2b7aa6" stroke-width="1.00" />
<rect x="970.9" y="186.8" width="5.7" height="5.7" fill="#ff0000"/>
<rect x="970.9" y="224.7" width="5.7" height="5.7" fill="#ff0000"/>
<path d="M973.8 238.3V257.3" fill="none" stroke="#0b8a43" stroke-width="1.10" />
<path d="M967.4 257.3h12.8l-6.4 6.6z" fill="none" stroke="#0b8a43" stroke-width="0.95" />
<rect x="970.9" y="235.4" width="5.7" height="5.7" fill="#ff0000"/>
<text x="980.1" y="251.3" font-size="5.90" fill="#cc1414" text-anchor="start" >gnd</text>
<text x="963.8" y="217.3" font-size="7.10" fill="#c8720f" text-anchor="end" stroke="#c8720f" stroke-width=".12">r=10k</text>
<text x="963.6" y="226.4" font-size="7.00" fill="#c41212" text-anchor="end" >R11</text>
<rect x="655.4" y="285.8" width="25.9" height="38.1" fill="none" stroke="#c9a9c1" stroke-width="0.9"/>
<path d="M668.3 285.8V323.7" fill="none" stroke="#0b8a43" stroke-width="1.10" />
<circle cx="668.3" cy="304.2" r="6.9" fill="none" stroke="#0b8a43" stroke-width="1.0"/>
<path d="M668.3 300.8V308.0M664.9 304.4l3.4 3.6l3.4 -3.6" fill="none" stroke="#0b8a43" stroke-width="0.90" />
<path d="M655.7 298.4H661.9l2.2 1.2M655.7 311.1H661.9l2.2 -1.2M659.1 298.0l.7 -1.6l.9 1.4" fill="none" stroke="#0b8a43" stroke-width="0.90" />
<rect x="665.4" y="282.9" width="5.7" height="5.7" fill="#ff22c4"/>
<rect x="666.9" y="284.4" width="2.9" height="2.9" fill="#ff2020"/>
<rect x="665.4" y="320.8" width="5.7" height="5.7" fill="#ff0000"/>
<rect x="652.7" y="295.4" width="6.0" height="6.0" fill="#35c8d0"/>
<rect x="654.2" y="296.9" width="3.0" height="3.0" fill="#ff2020"/>
<rect x="652.7" y="308.1" width="6.0" height="6.0" fill="#ff0000"/>
<text x="671.6" y="283.7" font-size="7.10" fill="#e01212" text-anchor="start" >G2</text>
<text x="678.3" y="301.7" font-size="7.10" fill="#c8720f" text-anchor="start" textLength="52" lengthAdjust="spacingAndGlyphs" stroke="#c8720f" stroke-width=".12">ggain=400.0n</text>
<path d="M668.6 323.8V334L667.8 336V350.7" fill="none" stroke="#2b7aa6" stroke-width="1.00" />
<path d="M667.8 350.7V354.3L674.1 360.2L661.5 363.9L674.1 367.5L661.5 371.2L674.1 374.9L661.5 378.6L667.8 381.5V388.6" fill="none" stroke="#0b8a43" stroke-width="1.00" />
<path d="M667.8 388.6V399.3" fill="none" stroke="#2b7aa6" stroke-width="1.00" />
<rect x="664.9" y="347.8" width="5.7" height="5.7" fill="#ff0000"/>
<rect x="664.9" y="385.7" width="5.7" height="5.7" fill="#ff0000"/>
<path d="M667.8 399.3V418.3" fill="none" stroke="#0b8a43" stroke-width="1.10" />
<path d="M661.4 418.3h12.8l-6.4 6.6z" fill="none" stroke="#0b8a43" stroke-width="0.95" />
<rect x="664.9" y="396.4" width="5.7" height="5.7" fill="#ff0000"/>
<text x="674.1" y="412.3" font-size="5.90" fill="#cc1414" text-anchor="start" >gnd</text>
<text x="657.8" y="378.3" font-size="7.10" fill="#c8720f" text-anchor="end" stroke="#c8720f" stroke-width=".12">r=10k</text>
<text x="657.6" y="387.4" font-size="7.00" fill="#c41212" text-anchor="end" >R9</text>
<path d="M1020.3 412.7V450.6" fill="none" stroke="#0b8a43" stroke-width="1.10" />
<circle cx="1020.3" cy="431.1" r="6.9" fill="none" stroke="#0b8a43" stroke-width="1.0"/>
<path d="M1020.3 427.7V434.9M1016.9 431.3l3.4 3.6l3.4 -3.6" fill="none" stroke="#0b8a43" stroke-width="0.90" />
<path d="M1007.7 425.3H1013.9l2.2 1.2M1007.7 438.0H1013.9l2.2 -1.2M1011.1 424.9l.7 -1.6l.9 1.4" fill="none" stroke="#0b8a43" stroke-width="0.90" />
<rect x="1017.4" y="409.8" width="5.7" height="5.7" fill="#ff0000"/>
<rect x="1017.4" y="447.7" width="5.7" height="5.7" fill="#ff0000"/>
<rect x="1004.7" y="422.3" width="6.0" height="6.0" fill="#f2d8e4"/>
<rect x="1006.2" y="423.8" width="3.0" height="3.0" fill="#ff2020"/>
<rect x="1004.7" y="435.0" width="6.0" height="6.0" fill="#ff22c4"/>
<rect x="1006.2" y="436.5" width="3.0" height="3.0" fill="#ff2020"/>
<text x="1023.6" y="410.6" font-size="7.10" fill="#e01212" text-anchor="start" >G3</text>
<text x="1030.3" y="428.6" font-size="7.10" fill="#c8720f" text-anchor="start" textLength="52" lengthAdjust="spacingAndGlyphs" stroke="#c8720f" stroke-width=".12">ggain=400.0n</text>
<path d="M1020.6 450.6V461L1019.9 463V477.7" fill="none" stroke="#2b7aa6" stroke-width="1.00" />
<path d="M1019.9 477.7V481.3L1026.2 487.2L1013.6 490.9L1026.2 494.5L1013.6 498.2L1026.2 501.9L1013.6 505.6L1019.9 508.5V515.6" fill="none" stroke="#0b8a43" stroke-width="1.00" />
<path d="M1019.9 515.6V526.3" fill="none" stroke="#2b7aa6" stroke-width="1.00" />
<rect x="1017.0" y="474.8" width="5.7" height="5.7" fill="#ff0000"/>
<rect x="1017.0" y="512.7" width="5.7" height="5.7" fill="#ff0000"/>
<path d="M1019.9 526.3V545.3" fill="none" stroke="#0b8a43" stroke-width="1.10" />
<path d="M1013.5 545.3h12.8l-6.4 6.6z" fill="none" stroke="#0b8a43" stroke-width="0.95" />
<rect x="1017.0" y="523.4" width="5.7" height="5.7" fill="#ff0000"/>
<text x="1026.2" y="539.3" font-size="5.90" fill="#cc1414" text-anchor="start" >gnd</text>
<text x="1009.9" y="505.3" font-size="7.10" fill="#c8720f" text-anchor="end" stroke="#c8720f" stroke-width=".12">r=10k</text>
<text x="1009.7" y="514.4" font-size="7.00" fill="#c41212" text-anchor="end" >R10</text>
<path d="M1244 221Q1262 213.5 1290 210.6" fill="none" stroke="#0b8a43" stroke-width="1.10" />
<path d="M1244 221A99.5 99.5 0 0 1 1244 378.5" fill="none" stroke="#0b8a43" stroke-width="1.10" />
<path d="M1244 378.5Q1262 384.5 1290 387" fill="none" stroke="#0b8a43" stroke-width="1.10" />
<path d="M1238.4 264.4H1280M1238 340.4H1278" fill="none" stroke="#0b8a43" stroke-width="1.10" />
<rect x="1235.7" y="261.7" width="5.6" height="5.6" fill="#ff0000"/>
<rect x="1235.2" y="337.6" width="5.6" height="5.6" fill="#ff0000"/>
<path d="M1278.4 340.4l1.5 3.4M1278.6 375.6l1.2 2.6" fill="none" stroke="#e01010" stroke-width="1.00" />
<path d="M456.9 703.5V612.5H542.2V637" fill="none" stroke="#b3a383" stroke-width="1.00" />
<path d="M541.9 637V662.5M532.1 646.4H551.7M522.5 662.5H532.6V649.6H551.3V662.5H560.6" fill="none" stroke="#0b8a43" stroke-width="1.05" />
<path d="M547.9 656l3.4 5.7l3.4 -5.7" fill="none" stroke="#0b8a43" stroke-width="0.95" />
<path d="M541.9 662.5V694.8" fill="none" stroke="#2b7aa6" stroke-width="1.05" />
<path d="M563.6 662.4L567.4 660.8" fill="none" stroke="#a517a5" stroke-width="1.00" />
<rect x="519.3" y="659.5" width="6.2" height="6.2" fill="#ff0000"/>
<rect x="538.7" y="659.5" width="6.2" height="6.2" fill="#ff0000"/>
<rect x="557.7" y="659.5" width="6.2" height="6.2" fill="#ff18c0"/>
<rect x="559.2" y="661.1" width="3.1" height="3.1" fill="#ff2020"/>
<rect x="538.8" y="634.0" width="6.0" height="6.0" fill="#ff0000"/>
<rect x="540.3" y="635.5" width="3.0" height="3.0" fill="#ff5a4a"/>
<text x="519.4" y="662.0" font-size="5.60" fill="#d9cfb4" transform="rotate(-90 519.4 662.0)"  textLength="22.4" lengthAdjust="spacingAndGlyphs">virt_gnd</text>
<text x="538.4" y="637.0" font-size="5.60" fill="#d9cfb4" transform="rotate(-90 538.4 637.0)"  textLength="11.6" lengthAdjust="spacingAndGlyphs">vout</text>
<text x="560.8" y="653.2" font-size="5.60" fill="#16a04c" transform="rotate(-90 560.8 653.2)"  textLength="18.6" lengthAdjust="spacingAndGlyphs">nmos4</text>
<text x="568.2" y="662.0" font-size="5.40" fill="#dcd2ea" transform="rotate(-90 568.2 662.0)"  textLength="11.8" lengthAdjust="spacingAndGlyphs">vdiff</text>
<text x="520.2" y="676.8" font-size="7.60" fill="#e31212" transform="rotate(-90 520.2 676.8)"  textLength="9.8" lengthAdjust="spacingAndGlyphs">M8</text>
<text x="529.6" y="681.3" font-size="6.00" fill="#c8720f" transform="rotate(-90 529.6 681.3)" stroke="#c8720f" stroke-width=".2" textLength="15.2" lengthAdjust="spacingAndGlyphs">w=3u</text>
<text x="538.7" y="686.7" font-size="6.00" fill="#c8720f" transform="rotate(-90 538.7 686.7)" stroke="#c8720f" stroke-width=".2" textLength="20.6" lengthAdjust="spacingAndGlyphs">l=600n</text>
<text x="545.6" y="672.4" font-size="4.60" fill="#d9cfb4" transform="rotate(-90 545.6 672.4)" >g</text>
<text x="557.8" y="686.7" font-size="6.00" fill="#4b93c2" transform="rotate(-90 557.8 686.7)"  textLength="20.6" lengthAdjust="spacingAndGlyphs">nGate1</text>
<text x="567.5" y="676.2" font-size="6.00" fill="#c8720f" transform="rotate(-90 567.5 676.2)" stroke="#c8720f" stroke-width=".2" textLength="10.0" lengthAdjust="spacingAndGlyphs">m:1</text>
<text x="564.4" y="717.4" font-size="27" fill="#2b7aa6" font-weight="200" font-family="'DejaVu Sans Light','DejaVu Sans',sans-serif" transform="rotate(-90 564.4 717.4)">gnd</text>
</svg>
<div class="a" style="left:5115.6px;top:371.2px;width:4.4px;height:2468.8px;background:#9c9c9c"></div>
<div class="a" style="left:1386.8px;top:2812px;width:3733.2px;height:28px;background:#9b9b9b"></div>
<div class="a" style="left:1386.8px;top:2812px;width:1228px;height:28px;background:linear-gradient(#dedede,#c6c6c6);border-radius:0 14px 14px 0"></div>
<div class="a" style="left:1386.8px;top:2812px;width:36px;height:28px;background:#d6d6d6"></div>
<div class="a" style="left:2016.8px;top:2820.8px;width:2px;height:10.4px;background:#8a8a8a;box-shadow:4.4px 0 0 #8a8a8a,8.8px 0 0 #8a8a8a"></div>
<div class="a" style="left:5084px;top:2812px;width:36px;height:28px;background:#dcdcdc"></div>
<svg class="a" style="left:5090.4px;top:2816px" width="20" height="24" viewBox="0 0 5 6"><path d="M.8.4l3.4 2.4L.8 5.2z" fill="#fff" stroke="#c4c4c4" stroke-width=".5"/></svg>
<!-- Edit Object Properties dialog -->
<div class="a" style="left:142.4px;top:179.2px;width:1081.6px;height:2196px;background:#534fa6;border-radius:20px 20px 0 0;box-shadow:0 0 0 1.6px #2a2770"></div>
<div class="a" style="left:142.4px;top:179.2px;width:1081.6px;height:48px;border-radius:20px 20px 0 0;background:linear-gradient(#8985ce 0%,#6d69bb 9%,#3d3996 20%,#45419f 45%,#6460bb 74%,#7b77cd 86%,#38348a 93%,#28246e 100%)"></div>
<div class="a" style="left:153.6px;top:225.6px;width:1058.8px;height:2136px;background:#f0f0f0;border-left:8.8px solid #dadada;border-right:2.8px solid #b9b7dd;box-sizing:border-box"></div>
<div class="tc ttl" style="left:682.4px;top:203.2px;font-size:27.6px;color:#dcdaf3;text-shadow:2px 2px 1.2px #14114a;-webkit-text-stroke:0.64px #dcdaf3">Edit Object Properties</div>
<svg class="a" style="left:158.4px;top:186.4px" width="32" height="36" viewBox="0 0 8 9"><path d="M.8.8h4.4l1.8 1.8v5.4H.8z" fill="#f4f4f0" stroke="#c9c9c0" stroke-width=".5"/></svg>
<svg class="a" style="left:1177.6px;top:186.4px" width="36" height="36" viewBox="0 0 9 9"><circle cx="4.2" cy="4.2" r="3.6" fill="#3a3a48" stroke="#9a98c8" stroke-width=".5"/><path d="M2.2 3.4l2-1.4 1.4 1.2-.6 1.6 1.4 1.2M2.4 5.6l1.4-.6" stroke="#d9d9e6" stroke-width=".8" fill="none"/></svg>
<div class="a" style="left:142.4px;top:2345.6px;width:16px;height:29.6px;border-right:2.4px solid #a8a6d6;box-sizing:border-box"></div>
<div class="a" style="left:142.4px;top:2360px;width:42.4px;height:15.2px;border-top:2.4px solid #a8a6d6;border-right:2.4px solid #a8a6d6;box-sizing:border-box"></div>
<div class="a" style="left:1182.4px;top:2360px;width:41.6px;height:15.2px;border-top:2.4px solid #a8a6d6;border-left:2.4px solid #a8a6d6;box-sizing:border-box"></div>
<div class="grp" style="left:160px;top:250.8px;width:1018.8px;height:143.6px"></div>
<div class="t" style="left:170.4px;top:287.2px;">Apply To</div>
<div class="cmb" style="left:381.2px;top:260.4px;width:201.2px;height:37.6px"><span>only current</span><i style="width:32.8px"></i></div>
<div class="cmb" style="left:596.8px;top:260.4px;width:154px;height:37.6px"><span>instance</span><i style="width:32.8px"></i></div>
<div class="t" style="left:170.4px;top:343.6px;">Show</div>
<div class="cb" style="left:386.4px;top:337.2px"></div>
<div class="t" style="left:421.2px;top:350px;">system</div>
<div class="cb" style="left:521.6px;top:337.2px"></div>
<div class="t" style="left:554.8px;top:350px;">user</div>
<div class="cb" style="left:626.8px;top:337.2px"></div>
<div class="t" style="left:662px;top:350px;">CDF</div>
<svg class="a" style="left:520px;top:333.6px" width="32" height="32" viewBox="0 0 8 8"><path d="M1.2 4l1.8 2.2L6.8 1" fill="none" stroke="#d01010" stroke-width="1.3"/></svg>
<svg class="a" style="left:625.2px;top:333.6px" width="32" height="32" viewBox="0 0 8 8"><path d="M1.2 4l1.8 2.2L6.8 1" fill="none" stroke="#d01010" stroke-width="1.3"/></svg>
<div class="grp" style="left:160px;top:406.4px;width:1018.8px;height:350.8px"></div>
<div class="btn" style="left:318px;top:414.4px;width:163.6px;height:39.2px;line-height:33.6px;">Browse</div>
<div class="btn" style="left:489.6px;top:414.4px;width:435.2px;height:39.2px;line-height:33.6px;">Reset Instance Labels Display</div>
<div class="tc" style="left:341.2px;top:479.2px;">Property</div>
<div class="tc" style="left:757.2px;top:479.2px;">Value</div>
<div class="tc" style="left:1087.2px;top:479.2px;">Display</div>
<div class="t" style="left:276px;top:540px;">Library Name</div>
<div class="fld" style="left:486.4px;top:513.6px;width:520px;height:52.8px;overflow:hidden;border-radius:8px 10.4px 10.4px 8px"><span>analogLib</span><i style="position:absolute;right:0;top:0;bottom:0;width:35.2px;background:linear-gradient(#d81818 0%,#c00808 45%,#8e0000 100%)"></i><b style="position:absolute;right:10.8px;top:21.6px;border-left:6.8px solid transparent;border-right:6.8px solid transparent;border-top:8.8px solid #fff"></b></div>
<div class="cmb" style="left:1018px;top:516px;width:122.8px;height:38.8px"><span>off</span><i style="width:32.8px"></i></div>
<div class="t" style="left:276px;top:600.8px;">Cell Name</div>
<div class="fld" style="left:486.4px;top:574.4px;width:520px;height:52.8px;overflow:hidden;border-radius:8px 10.4px 10.4px 8px"><span>vccs</span><i style="position:absolute;right:0;top:0;bottom:0;width:35.2px;background:linear-gradient(#d81818 0%,#c00808 45%,#8e0000 100%)"></i><b style="position:absolute;right:10.8px;top:21.6px;border-left:6.8px solid transparent;border-right:6.8px solid transparent;border-top:8.8px solid #fff"></b></div>
<div class="cmb" style="left:1018px;top:576.8px;width:122.8px;height:38.8px"><span>off</span><i style="width:32.8px"></i></div>
<div class="t" style="left:276px;top:661.2px;">View Name</div>
<div class="fld" style="left:486.4px;top:634.8px;width:520px;height:52.8px;overflow:hidden;border-radius:8px 10.4px 10.4px 8px"><span>symbol</span><i style="position:absolute;right:0;top:0;bottom:0;width:35.2px;background:linear-gradient(#d81818 0%,#c00808 45%,#8e0000 100%)"></i><b style="position:absolute;right:10.8px;top:21.6px;border-left:6.8px solid transparent;border-right:6.8px solid transparent;border-top:8.8px solid #fff"></b></div>
<div class="cmb" style="left:1018px;top:637.2px;width:122.8px;height:38.8px"><span>off</span><i style="width:32.8px"></i></div>
<div class="t" style="left:276px;top:721.6px;">Instance Name</div>
<div class="fld" style="left:491.6px;top:696.8px;width:509.6px;height:51.2px;"><span>G2</span></div>
<div class="cmb" style="left:1018px;top:697.6px;width:122.8px;height:38.8px"><span>off</span><i style="width:32.8px"></i></div>
<div class="grp" style="left:160px;top:770px;width:1018.8px;height:170.8px"></div>
<div class="btn" style="left:489.6px;top:777.2px;width:164.4px;height:41.2px;line-height:35.6px;">Add</div>
<div class="btn" style="left:662px;top:777.2px;width:165.6px;height:41.2px;line-height:35.6px;">Delete</div>
<div class="btn" style="left:835.6px;top:777.2px;width:165.6px;height:41.2px;line-height:35.6px;">Modify</div>
<div class="tc" style="left:371.2px;top:844.8px;">User Property</div>
<div class="tc" style="left:624px;top:844.8px;">Master Value</div>
<div class="tc" style="left:888px;top:844.8px;">Local Value</div>
<div class="tc" style="left:1087.2px;top:844.8px;">Display</div>
<div class="t" style="left:290.8px;top:898px;">lvsIgnore</div>
<div class="fld" style="left:491.6px;top:879.6px;width:248.4px;height:46.4px;background:#e2e2e2;"><span>TRUE</span></div>
<div class="fld" style="left:757.2px;top:879.6px;width:244px;height:46.4px;"></div>
<div class="cmb" style="left:1018px;top:878px;width:122.8px;height:38.8px"><span>off</span><i style="width:32.8px"></i></div>
<div class="grp" style="left:160px;top:950.8px;width:1018.8px;height:744px"></div>
<div class="tc" style="left:376px;top:985.2px;">CDF Parameter</div>
<div class="tc" style="left:757.2px;top:985.2px;">Value</div>
<div class="tc" style="left:1087.2px;top:985.2px;">Display</div>
<div class="t" style="left:170.4px;top:1036.8px;">Type of transfer char</div>
<div class="cmb" style="left:1018px;top:1015.6px;width:122.8px;height:38.8px"><span>off</span><i style="width:32.8px"></i></div>
<svg class="a" style="left:540px;top:1024.4px" width="176" height="32" viewBox="135 0 44 8"><circle cx="138.7" cy="4.2" r="2.6" fill="#fff" stroke="#9a9a9a" stroke-width=".6"/><circle cx="138.7" cy="4.2" r="1.35" fill="#d01010"/><circle cx="171.3" cy="4.2" r="2.6" fill="#fdfdfd" stroke="#9a9a9a" stroke-width=".6"/></svg>
<div class="t" style="left:580px;top:1042.4px;">Linear</div>
<div class="t" style="left:709.2px;top:1042.4px;">PWL</div>
<div class="t" style="left:170.4px;top:1098.8px;">Smoothing Factor</div>
<div class="cmb" style="left:1018px;top:1077.6px;width:122.8px;height:38.8px"><span>off</span><i style="width:32.8px"></i></div>
<div class="fld" style="left:544.8px;top:1076.8px;width:351.2px;height:49.2px;"></div>
<div class="t" style="left:170.4px;top:1156px;">Transconductance</div>
<div class="cmb" style="left:1018px;top:1134.8px;width:122.8px;height:38.8px"><span>off</span><i style="width:32.8px"></i></div>
<div class="fld" style="left:544.8px;top:1131.2px;width:351.2px;height:49.2px;border:3.6px solid #6e6e6e"><span style="background:#9c9c9c;color:#fff;left:6.4px;padding:0 2.4px;line-height:28.8px;margin-top:-14px;text-shadow:0 0 2px #fff">400.0n Mhos</span></div>
<div class="t" style="left:170.4px;top:1212.8px;">Multiplier</div>
<div class="cmb" style="left:1018px;top:1191.6px;width:122.8px;height:38.8px"><span>off</span><i style="width:32.8px"></i></div>
<div class="fld" style="left:544.8px;top:1190.4px;width:351.2px;height:49.2px;"><span>1</span></div>
<div class="t" style="left:170.4px;top:1270px;">Maximum Output Current</div>
<div class="cmb" style="left:1018px;top:1248.8px;width:122.8px;height:38.8px"><span>off</span><i style="width:32.8px"></i></div>
<div class="fld" style="left:544.8px;top:1247.6px;width:351.2px;height:49.2px;"><span>20n</span></div>
<div class="t" style="left:170.4px;top:1326.8px;">Minimum Output Current</div>
<div class="cmb" style="left:1018px;top:1305.6px;width:122.8px;height:38.8px"><span>off</span><i style="width:32.8px"></i></div>
<div class="fld" style="left:544.8px;top:1304.4px;width:351.2px;height:49.2px;"><span>-20n</span></div>
<div class="t" style="left:170.4px;top:1383.6px;">Temperature coefficient 1</div>
<div class="cmb" style="left:1018px;top:1362.4px;width:122.8px;height:38.8px"><span>off</span><i style="width:32.8px"></i></div>
<div class="fld" style="left:544.8px;top:1361.2px;width:351.2px;height:49.2px;"></div>
<div class="t" style="left:170.4px;top:1440.4px;">Temperature coefficient 2</div>
<div class="cmb" style="left:1018px;top:1419.2px;width:122.8px;height:38.8px"><span>off</span><i style="width:32.8px"></i></div>
<div class="fld" style="left:544.8px;top:1418px;width:351.2px;height:49.2px;"></div>
<div class="t" style="left:170.4px;top:1497.2px;">Time delay</div>
<div class="cmb" style="left:1018px;top:1476px;width:122.8px;height:38.8px"><span>off</span><i style="width:32.8px"></i></div>
<div class="fld" style="left:544.8px;top:1474.8px;width:351.2px;height:49.2px;"></div>
<div class="t" style="left:170.4px;top:1552px;">Type of Source</div>
<div class="cmb" style="left:1018px;top:1526px;width:122.8px;height:38.8px"><span>off</span><i style="width:32.8px"></i></div>
<div class="cmb" style="left:539.6px;top:1524px;width:125.6px;height:37.6px"><span>vccs</span><i style="width:32.8px"></i></div>
<div class="t" style="left:170.4px;top:1608.4px;">Type of input of source</div>
<div class="cmb" style="left:1018px;top:1582.4px;width:122.8px;height:38.8px"><span>off</span><i style="width:32.8px"></i></div>
<div class="cmb" style="left:539.6px;top:1581.2px;width:125.6px;height:36.8px"><i style="width:32.8px"></i></div>
<div class="t" style="left:170.4px;top:1665.6px;">Absolute Output Current</div>
<div class="cmb" style="left:1018px;top:1639.6px;width:122.8px;height:38.8px"><span>off</span><i style="width:32.8px"></i></div>
<div class="cmb" style="left:539.6px;top:1638.4px;width:94.4px;height:36.8px"><i style="width:32.8px"></i></div>
<div class="btn" style="left:278.8px;top:2326.4px;width:102.4px;height:39.2px;line-height:33.6px;background:linear-gradient(#e01818,#c40808 50%,#a00000);border-color:#8a0000;color:#fff;font-weight:bold"><u>O</u>K</div>
<div class="btn" style="left:389.2px;top:2326.4px;width:139.6px;height:39.2px;line-height:33.6px;"><u>C</u>ancel</div>
<div class="btn" style="left:538.8px;top:2326.4px;width:125.2px;height:39.2px;line-height:33.6px;"><u>A</u>pply</div>
<div class="btn" style="left:672px;top:2326.4px;width:150.4px;height:39.2px;line-height:33.6px;">Defaults</div>
<div class="btn" style="left:829.6px;top:2326.4px;width:141.6px;height:39.2px;line-height:33.6px;">Previous</div>
<div class="btn" style="left:978px;top:2326.4px;width:105.2px;height:39.2px;line-height:33.6px;">Next</div>
<div class="btn" style="left:1090.4px;top:2326.4px;width:113.2px;height:39.2px;line-height:33.6px;"><u>H</u>elp</div>
</div></body></html>
